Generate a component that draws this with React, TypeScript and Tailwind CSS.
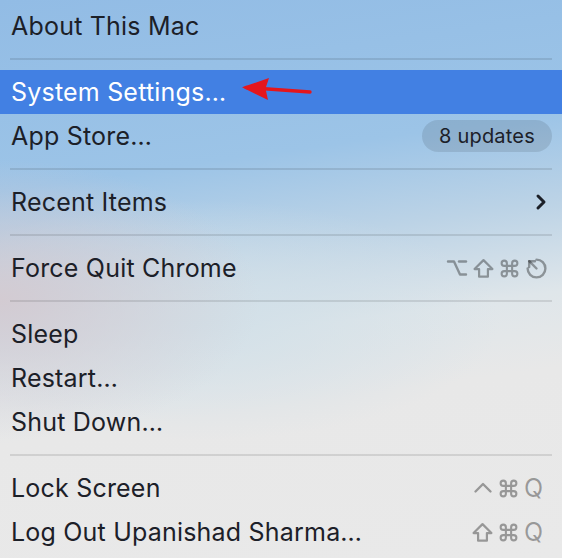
import { ChevronRight } from "lucide-react";
import type { ReactNode } from "react";

const font = { fontFamily: "Inter, 'Noto Sans', sans-serif" };

function OptionKey() {
  return (
    <svg width="22" height="20" viewBox="0 0 22 20" fill="none" stroke="currentColor" strokeWidth="2.4" strokeLinecap="round" strokeLinejoin="round">
      <path d="M2 3.5h6l6 13h6" />
      <path d="M13 3.5h7" />
    </svg>
  );
}

function ShiftKey() {
  return (
    <svg width="21" height="21" viewBox="0 0 20 20" fill="none" stroke="currentColor" strokeWidth="2.1" strokeLinejoin="round">
      <path d="M10 2 18.5 10.5h-4.3v7.3H5.8v-7.3H1.5z" />
    </svg>
  );
}

function CommandKey() {
  return (
    <svg width="21" height="21" viewBox="0 0 24 24" fill="none" stroke="currentColor" strokeWidth="2.4" strokeLinecap="round" strokeLinejoin="round">
      <path d="M15 6v12a3 3 0 1 0 3-3H6a3 3 0 1 0 3 3V6a3 3 0 1 0-3 3h12a3 3 0 1 0-3-3" />
    </svg>
  );
}

function EscapeKey() {
  return (
    <svg width="23" height="23" viewBox="0 0 22 22" fill="none" stroke="currentColor" strokeWidth="2.3" strokeLinecap="round" strokeLinejoin="round">
      <path d="M11 2.5A8.5 8.5 0 1 1 2.5 11" />
      <path d="M11 11 4 4" />
      <path d="M4 4h5.5M4 4v5.5" />
    </svg>
  );
}

function ControlKey() {
  return (
    <svg width="20" height="14" viewBox="0 0 20 14" fill="none" stroke="currentColor" strokeWidth="2.4" strokeLinecap="round" strokeLinejoin="round">
      <path d="M2.5 10.5 10 3l7.5 7.5" />
    </svg>
  );
}

function Row({ label, right, active }: { label: string; right?: ReactNode; active?: boolean }) {
  return (
    <div
      className={`flex h-[44px] items-center justify-between pl-[11px] pr-[14px] text-[25px] ${
        active ? "bg-[#4280e3] text-white" : "text-[#1c2028]"
      }`}
    >
      <span className="translate-y-[1px] tracking-[0.2px]">{label}</span>
      {right}
    </div>
  );
}

function Separator() {
  return (
    <div className="flex h-[22px] items-center px-[10px]">
      <div className="h-[2px] w-full bg-black/10" />
    </div>
  );
}

function Keys({ children }: { children: ReactNode }) {
  return <div className="flex items-center gap-[5px] text-black/35">{children}</div>;
}

export default function App() {
  return (
    <div
      className="relative h-[558px] w-full overflow-hidden bg-[radial-gradient(ellipse_260px_140px_at_0px_300px,#d3cbd2_0%,rgba(211,203,210,0)_100%),radial-gradient(ellipse_300px_120px_at_200px_320px,#d2e0e8_0%,rgba(210,224,232,0)_100%),linear-gradient(172deg,#92bce5_0%,#9cc4e7_30%,#bcd3e6_44%,#dfe6ea_58%,#e8e8e8_70%,#e9e9e9_100%)] pt-[4px]"
      style={font}
    >
      <Row label="About This Mac" />
      <Separator />
      <Row label="System Settings…" active />
      <Row
        label="App Store…"
        right={
          <span className="-mr-[4px] flex h-[32px] w-[130px] items-center justify-center rounded-full bg-black/10 text-[20px] tracking-[0.2px] text-[#1c2028]">
            8 updates
          </span>
        }
      />
      <Separator />
      <Row label="Recent Items" right={<ChevronRight size={24} strokeWidth={3} className="-mr-[5px] text-[#1c2028]" />} />
      <Separator />
      <Row
        label="Force Quit Chrome"
        right={
          <Keys>
            <OptionKey />
            <ShiftKey />
            <CommandKey />
            <EscapeKey />
          </Keys>
        }
      />
      <Separator />
      <Row label="Sleep" />
      <Row label="Restart…" />
      <Row label="Shut Down…" />
      <Separator />
      <Row
        label="Lock Screen"
        right={
          <Keys>
            <ControlKey />
            <CommandKey />
            <span className="w-[24px] text-[25px] leading-none">Q</span>
          </Keys>
        }
      />
      <Row
        label="Log Out Upanishad Sharma…"
        right={
          <Keys>
            <ShiftKey />
            <CommandKey />
            <span className="w-[24px] text-[25px] leading-none">Q</span>
          </Keys>
        }
      />

      <svg className="absolute left-[238px] top-[76px]" width="76" height="28" viewBox="0 0 76 28" fill="none">
        <path d="M8 11.5 L72 16" stroke="#e5161c" strokeWidth="3.4" strokeLinecap="round" />
        <path d="M4 11.3 L31 2 L27.5 12.5 L30 24 Z" fill="#e5161c" />
      </svg>
    </div>
  );
}
